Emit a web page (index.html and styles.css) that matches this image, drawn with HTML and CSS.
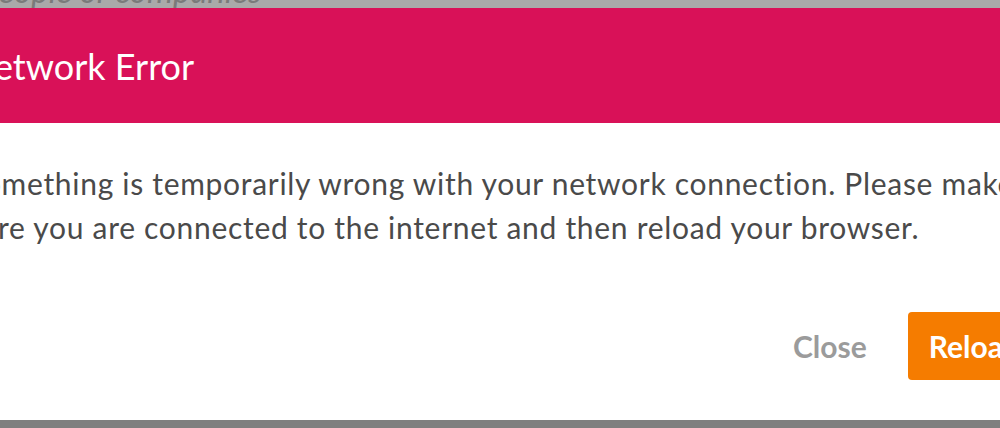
FILE: index.html
```html
<!DOCTYPE html>
<html lang="en">
<head>
<meta charset="utf-8">
<title>Network Error</title>
<link rel="stylesheet" href="styles.css">
</head>
<body>
<div class="backdrop">
  <p class="ghost">people or companies</p>
</div>
<div class="modal">
  <div class="modal-header">
    <h2 class="modal-title">Network Error</h2>
  </div>
  <div class="modal-body">
    <p class="message">Something is temporarily wrong with your network connection. Please make sure you are connected to the internet and then reload your browser.</p>
  </div>
  <div class="modal-footer">
    <button class="btn btn-close" type="button">Close</button>
    <button class="btn btn-reload" type="button">Reload</button>
  </div>
</div>
</body>
</html>
```

FILE: styles.css
```css
html, body {
  margin: 0;
  padding: 0;
}

body {
  height: 428px;
  overflow: hidden;
  background: #7f7f7f;
  font-family: "Lato", "Noto Sans", sans-serif;
}

.backdrop {
  height: 8px;
  overflow: hidden;
  background: #a9a9a9;
}

.ghost {
  margin: -29px 0 0 -19px;
  font-size: 33px;
  line-height: 1.2;
  font-style: italic;
  color: #7a7a7a;
  white-space: nowrap;
}

.modal {
  width: 1134px;
  margin-left: -63px;
  background: #ffffff;
}

.modal-header {
  height: 115px;
  display: flex;
  align-items: center;
  padding: 0 30px;
  background: #d91158;
}

.modal-title {
  margin: 0;
  font-size: 36px;
  font-weight: 400;
  color: #ffffff;
  line-height: 1;
}

.modal-body {
  padding: 38px 30px 0;
}

.message {
  margin: 0;
  font-size: 30px;
  line-height: 44px;
  letter-spacing: 0.7px;
  color: #4a4a4a;
}

.modal-footer {
  display: flex;
  justify-content: flex-end;
  padding: 63px 30px 40px;
}

.btn {
  height: 68px;
  border: none;
  font-family: inherit;
  font-size: 30px;
  cursor: pointer;
}

.btn-close {
  padding: 0 21px;
  margin-right: 20px;
  background: transparent;
  color: #9b9b9b;
  font-weight: 700;
}

.btn-reload {
  padding: 0 21px;
  background: #f57c00;
  color: #ffffff;
  font-weight: 700;
  border-radius: 4px;
}
```
